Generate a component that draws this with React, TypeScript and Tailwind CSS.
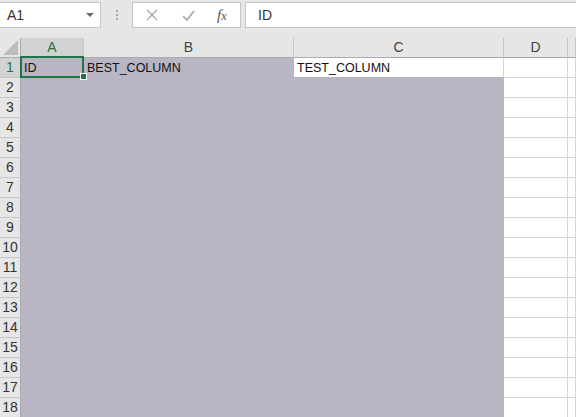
import React from 'react';

const FILL = 'bg-[#b9b5c3]';
const cols = ['A', 'B', 'C', 'D', ''];
const rows = Array.from({ length: 18 }, (_, i) => i + 1);

function cellText(r: number, c: number) {
  if (r !== 1) return '';
  return ['ID', 'BEST_COLUMN', 'TEST_COLUMN', '', ''][c];
}

function isFilled(r: number, c: number) {
  if (c > 2) return false;
  if (r === 1 && c === 2) return false;
  return true;
}

export default function App() {
  return (
    <div className="w-[576px] h-[417px] overflow-hidden bg-[#e6e6e6] font-['Liberation_Sans',Arial,sans-serif]">
      {/* formula bar */}
      <div className="flex items-start h-[38px] pt-[2px]">
        <div className="flex items-center justify-between w-[101px] h-[26px] bg-white border border-l-0 border-[#c6c6c6] pl-[7px] pr-[6px]">
          <span className="text-[14px] text-[#333]">A1</span>
          <svg width="8" height="5" viewBox="0 0 8 5"><path d="M0 0h8L4 4z" fill="#6b6b6b" /></svg>
        </div>
        <div className="flex flex-col gap-[2px] w-[31px] items-center pt-[8px]">
          <span className="w-[2px] h-[2px] bg-[#a8a8a8]" />
          <span className="w-[2px] h-[2px] bg-[#a8a8a8]" />
          <span className="w-[2px] h-[2px] bg-[#a8a8a8]" />
        </div>
        <div className="flex items-center w-[109px] h-[26px] bg-white border border-[#c6c6c6]">
          <svg className="ml-[13px]" width="12" height="12" viewBox="0 0 12 12">
            <path d="M1 1l10 10M11 1L1 11" stroke="#a6a6a6" strokeWidth="1.3" />
          </svg>
          <svg className="ml-[24px]" width="13" height="11" viewBox="0 0 13 11">
            <path d="M1 6l4 4 7-9" stroke="#a6a6a6" strokeWidth="1.6" fill="none" />
          </svg>
          <span className="ml-[22px] font-['Liberation_Serif',serif] italic text-[15px] text-[#555] leading-none">
            f<span className="text-[12px]">x</span>
          </span>
        </div>
        <div className="flex-1 flex items-center h-[26px] ml-[4px] bg-white border border-r-0 border-[#c6c6c6] pl-[12px]">
          <span className="text-[14px] text-[#333]">ID</span>
        </div>
      </div>

      {/* sheet grid */}
      <div className="relative grid grid-cols-[21px_63px_210px_210px_64px_1fr] text-[12.5px] text-[#111]">
        <div className="relative h-[20px] border-r border-b border-[#ababab]">
          <svg className="absolute right-[2px] bottom-[2px]" width="15" height="15" viewBox="0 0 15 15">
            <path d="M15 0v15H0z" fill="#bcbcbc" />
          </svg>
        </div>
        {cols.map((c, i) => (
          <div
            key={i}
            className={
              'h-[20px] flex items-center justify-center border-r border-[#c6c6c6] text-[14px] ' +
              (i === 0 ? 'bg-[#d2d2d2] text-[#217346] border-b-2 border-b-[#217346]' : 'text-[#444] border-b border-b-[#ababab]')
            }
          >
            {c}
          </div>
        ))}
        {rows.map(r => (
          <React.Fragment key={r}>
            <div
              className={
                'h-[20px] flex items-center justify-center border-r border-b border-[#c6c6c6] text-[14px] ' +
                (r === 1 ? 'bg-[#d2d2d2] text-[#217346] border-r-[#217346]' : 'text-[#333] border-r-[#ababab]')
              }
            >
              {r}
            </div>
            {cols.map((_, c) => {
              const filled = isFilled(r, c);
              const below = r === 1 && c === 2;
              return (
                <div
                  key={c}
                  className={
                    'h-[20px] flex items-center pl-[3px] pt-[2px] whitespace-nowrap overflow-hidden border-r border-b ' +
                    (filled
                      ? FILL + ' border-[#b9b5c3]'
                      : below
                        ? 'bg-white border-r-[#d4d4d4] border-b-[#b9b5c3]'
                        : 'bg-white border-[#d4d4d4]')
                  }
                >
                  {cellText(r, c)}
                </div>
              );
            })}
          </React.Fragment>
        ))}
        {/* active cell */}
        <div className="absolute left-[20px] top-[18px] w-[64px] h-[22px] border-2 border-[#217346]" />
        <div className="absolute left-[80px] top-[35px] w-[7px] h-[7px] bg-[#217346] border border-white" />
      </div>
    </div>
  );
}
